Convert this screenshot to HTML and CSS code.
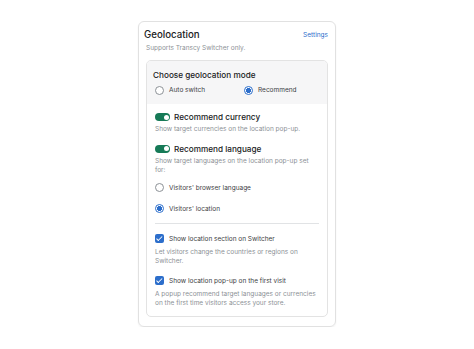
FILE: index.html
```html
<!DOCTYPE html>
<html lang="en">

<head>
    <meta charset="UTF-8">
    <title>Geolocation</title>
    <link rel="stylesheet" href="styles.css">
</head>

<body>
    <div class="card">
        <div class="card-head">
            <h2>Geolocation</h2>
            <a class="link" href="#">Settings</a>
        </div>
        <p class="subtitle">Supports Transcy Switcher only.</p>

        <div class="panel">
            <!-- Mode picker -->
            <div class="panel-head">
                <h3>Choose geolocation mode</h3>
                <div class="mode-row">
                    <label class="radio"><span class="dot"></span>Auto switch</label>
                    <label class="radio checked"><span class="dot"></span>Recommend</label>
                </div>
            </div>

            <div class="panel-body">
                <div class="toggle-row">
                    <span class="switch"></span>
                    <span class="toggle-label">Recommend currency</span>
                </div>
                <p class="help">Show target currencies on the location pop-up.</p>

                <div class="toggle-row">
                    <span class="switch"></span>
                    <span class="toggle-label">Recommend language</span>
                </div>
                <p class="help tight">Show target languages on the location pop-up set for:</p>

                <label class="radio option"><span class="dot"></span>Visitors' browser language</label>
                <label class="radio option checked"><span class="dot"></span>Visitors' location</label>

                <hr class="divider">

                <label class="check"><span class="box"></span>Show location section on Switcher</label>
                <p class="help spaced">Let visitors change the countries or regions on Switcher.</p>

                <label class="check"><span class="box"></span>Show location pop-up on the first visit</label>
                <p class="help last">A popup recommend target languages or currencies on the first time visitors access your store.</p>
            </div>
        </div>
    </div>
</body>

</html>
```

FILE: styles.css
```css
* {
    margin: 0;
    padding: 0;
    box-sizing: border-box;
}

body {
    font-family: 'Inter', 'Noto Sans', sans-serif;
    background-color: #fff;
    color: #202223;
    padding-top: 21px;
}

.card {
    width: 198px;
    margin: 0 auto;
    padding: 6px 7px 9px;
    border: 1px solid #e1e1e1;
    border-radius: 6px;
    box-shadow: 0 1px 2px rgba(0, 0, 0, 0.06);
}

.card-head {
    display: flex;
    justify-content: space-between;
    align-items: center;
}

.card-head h2 {
    font-size: 9.7px;
    font-weight: 500;
    line-height: 14px;
    margin-left: -2px;
}

.link {
    font-size: 6.5px;
    color: #2c6ecb;
    text-decoration: none;
}

.subtitle {
    font-size: 6.5px;
    line-height: 8px;
    color: #8c9196;
    margin-top: 2px;
    margin-bottom: 8px;
}

.panel {
    border: 1px solid #e3e3e3;
    border-radius: 5px;
    overflow: hidden;
}

.panel-head {
    background-color: #f6f6f7;
    padding: 8px 6px 7px;
}

.panel-head h3 {
    font-size: 8.2px;
    font-weight: 500;
    line-height: 12px;
}

.mode-row {
    display: grid;
    grid-template-columns: 89px 1fr;
    margin-top: 2px;
    padding-left: 2px;
}

.radio {
    display: flex;
    align-items: center;
    gap: 5px;
    font-size: 6.5px;
    line-height: 14px;
    color: #3d4043;
}

.dot {
    width: 9px;
    height: 9px;
    border: 1px solid #8c9196;
    border-radius: 50%;
    background-color: #fff;
    flex-shrink: 0;
}

.radio.checked .dot {
    border-color: #2c6ecb;
    background: radial-gradient(circle, #2c6ecb 0 2.3px, #fff 2.6px);
}

.panel-body {
    padding: 5px 8px 7px;
}

.toggle-row {
    display: flex;
    align-items: center;
    gap: 4px;
    margin-top: 2px;
}

.switch {
    position: relative;
    width: 15px;
    height: 8px;
    border-radius: 4px;
    background-color: #167a57;
}

.switch::after {
    content: '';
    position: absolute;
    top: 1.5px;
    right: 1.5px;
    width: 5px;
    height: 5px;
    border-radius: 50%;
    background-color: #fff;
}

.toggle-label {
    font-size: 8.2px;
    font-weight: 500;
    line-height: 12px;
}

.help {
    font-size: 6.5px;
    line-height: 9.5px;
    color: #8c9196;
    margin-top: 2px;
    margin-bottom: 8px;
}

.help.tight {
    margin-bottom: 5px;
}

.help.spaced {
    margin-bottom: 7px;
}

.help.last {
    margin-bottom: 0;
}

.option {
    margin-top: 1px;
    margin-bottom: 7px;
}

.divider {
    border: none;
    border-top: 1px solid #e1e3e5;
    margin: 0 0 8px;
}

.check {
    display: flex;
    align-items: center;
    gap: 5px;
    font-size: 6.5px;
    line-height: 14px;
    color: #3d4043;
    margin-bottom: 1px;
}

.box {
    position: relative;
    width: 9px;
    height: 9px;
    border-radius: 2px;
    background-color: #2c6ecb;
    flex-shrink: 0;
}

.box::after {
    content: '';
    position: absolute;
    left: 3px;
    top: 1.3px;
    width: 2px;
    height: 4.5px;
    border: solid #fff;
    border-width: 0 1.2px 1.2px 0;
    transform: rotate(45deg);
}
```
